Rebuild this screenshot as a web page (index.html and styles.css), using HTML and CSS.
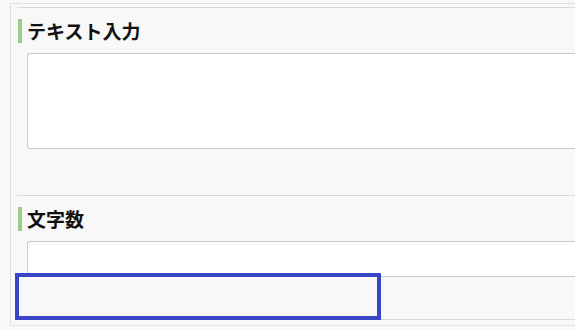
FILE: index.html
```html
<!DOCTYPE html>
<html lang="ja">
<head>
    <meta charset="UTF-8">
    <meta name="viewport" content="width=device-width, initial-scale=1.0">
    <title>文字数カウント</title>
    <link rel="stylesheet" href="styles.css">
</head>
<body>
    <div class="page">
        <div class="section">
            <h2 class="heading">テキスト入力</h2>
            <textarea class="text-area"></textarea>
        </div>
        <div class="section section-count">
            <h2 class="heading">文字数</h2>
            <input type="text" class="count-box" readonly>
        </div>
    </div>
    <div class="highlight"></div>
</body>
</html>
```

FILE: styles.css
```css
body {
    font-family: "Noto Sans CJK JP", "Noto Sans", sans-serif;
    margin: 0;
    background-color: #f8f8f9;
    overflow: hidden;
    color: #111;
}
.page {
    margin: 3px 0 0 10px;
    padding: 3px 0 5px 0;
    border-top: 1px dotted #c8c8c8;
    border-left: 1px dotted #c8c8c8;
    border-bottom: 1px dotted #d0d0d0;
}
.section {
    margin-left: 6px;
    border-top: 1px solid #d8d8d8;
    padding: 11px 0 46px 1px;
}
.section-count {
    padding-bottom: 42px;
    border-bottom: 1px solid #d8d8d8;
}
.heading {
    margin: 0 0 10px 0;
    height: 24px;
    line-height: 24px;
    font-size: 19px;
    font-weight: bold;
    border-left: 4px solid #9ccc8c;
    padding-left: 5px;
}
.text-area,
.count-box {
    display: block;
    margin-left: 9px;
    width: calc(100% - 9px);
    box-sizing: border-box;
    border: 1px solid #c8c8c8;
    border-right: none;
    border-radius: 3px 0 0 3px;
    background-color: #fff;
    padding: 0;
}
.text-area {
    height: 96px;
    resize: none;
}
.count-box {
    height: 36px;
}
.highlight {
    position: absolute;
    left: 15px;
    top: 273px;
    width: 366px;
    height: 47px;
    box-sizing: border-box;
    border: 4px solid #3a46c8;
}
```
